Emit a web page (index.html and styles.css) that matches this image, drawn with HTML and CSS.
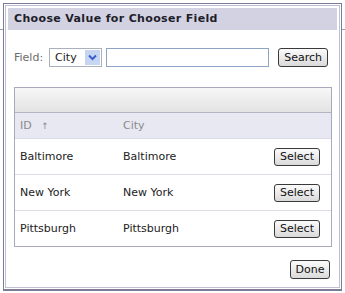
FILE: index.html
```html
<!DOCTYPE html>
<html>
<head>
<meta charset="utf-8">
<link rel="stylesheet" href="styles.css">
</head>
<body>
<div class="page">
  <div class="page-rule"></div>
</div>
<div class="dialog">
  <div class="inner">
    <div class="titlebar">Choose Value for Chooser Field</div>
    <div class="content">
      <div class="field-row">
        <span class="field-label">Field:</span>
        <div class="select">
          <span class="select-text">City</span>
          <span class="select-arrow">
            <svg width="9" height="7" viewBox="0 0 9 7"><path d="M1 1.5 L4.5 5 L8 1.5" fill="none" stroke="#3a5fc8" stroke-width="2"/></svg>
          </span>
        </div>
        <div class="text-input"></div>
        <button class="btn btn-search">Search</button>
      </div>
      <div class="grid">
        <div class="grid-band"></div>
        <div class="grid-head">
          <div class="col-id">ID <span class="sort">↑</span></div>
          <div class="col-city">City</div>
        </div>
        <div class="grid-row">
          <div class="col-id">Baltimore</div>
          <div class="col-city">Baltimore</div>
          <div class="col-act"><button class="btn btn-select">Select</button></div>
        </div>
        <div class="grid-row">
          <div class="col-id">New York</div>
          <div class="col-city">New York</div>
          <div class="col-act"><button class="btn btn-select">Select</button></div>
        </div>
        <div class="grid-row">
          <div class="col-id">Pittsburgh</div>
          <div class="col-city">Pittsburgh</div>
          <div class="col-act"><button class="btn btn-select">Select</button></div>
        </div>
      </div>
      <div class="footer">
        <button class="btn btn-done">Done</button>
      </div>
    </div>
  </div>
</div>
</body>
</html>
```
FILE: styles.css
```css
* { box-sizing: border-box; }
body {
  margin: 0;
  background: #fff;
  font-family: "DejaVu Sans", Verdana, sans-serif;
  font-size: 11px;
  color: #222;
}
.page { width: 345px; height: 293px; }
.page-rule { height: 30px; border-bottom: 1px solid #9aa0b8; }

.dialog {
  position: absolute;
  left: 3px;
  top: 3px;
  width: 339px;
  height: 288px;
  border: 1px solid #7c7c98;
  border-bottom-width: 2px;
  padding: 1px;
  background: #fff;
}
.inner {
  height: 100%;
  border: 1px solid #bfc0d4;
  padding: 2px;
  display: flex;
  flex-direction: column;
}
.titlebar {
  height: 22px;
  line-height: 22px;
  background: #d2d2e2;
  padding-left: 6px;
  font-weight: bold;
  letter-spacing: 0.35px;
  color: #1e1e2a;
}
.content { padding: 0 5px 0 6px; }

.field-row {
  display: flex;
  align-items: center;
  height: 19px;
  margin-top: 18px;
}
.field-label { color: #6c6c6c; margin-right: 6px; }
.select {
  width: 53px;
  height: 19px;
  border: 1px solid #aab0bc;
  display: flex;
  align-items: center;
  padding-left: 5px;
  padding-right: 1px;
}
.select-arrow {
  margin-left: auto;
  width: 15px;
  height: 15px;
  background: #c6d5f2;
  display: flex;
  align-items: center;
  justify-content: center;
}
.text-input {
  width: 163px;
  height: 19px;
  margin-left: 4px;
  border: 1px solid #8da4c4;
}
.btn {
  font-family: "DejaVu Sans", Verdana, sans-serif;
  font-size: 11px;
  color: #111;
  border: 1px solid #3a3a3a;
  border-radius: 3px;
  background: linear-gradient(#fbfbfb, #dadada);
  padding: 0;
  height: 18px;
  line-height: 16px;
}
.btn-search { width: 50px; height: 19px; margin-left: 9px; }

.grid {
  margin-top: 20px;
  width: 318px;
  border: 1px solid #a9a9bd;
}
.grid-band {
  height: 25px;
  background: linear-gradient(#f7f7f7, #e3e3e3);
  border-bottom: 1px solid #b4b4c4;
}
.grid-head, .grid-row {
  display: flex;
  align-items: center;
}
.grid-head {
  height: 25px;
  background: #e8e8f3;
  color: #8a8a8a;
}
.grid-row {
  height: 36px;
  border-top: 1px solid #dcdce8;
}
.col-id { width: 104px; padding-left: 5px; }
.col-city { width: 150px; padding-left: 4px; }
.col-act { flex: 1; display: flex; justify-content: flex-end; padding-right: 11px; }
.sort { font-size: 9px; margin-left: 6px; color: #8a8a8a; }
.btn-select { width: 46px; }

.footer {
  display: flex;
  justify-content: flex-end;
  margin-top: 13px;
  padding-right: 2px;
}
.btn-done { width: 40px; height: 19px; }
```
